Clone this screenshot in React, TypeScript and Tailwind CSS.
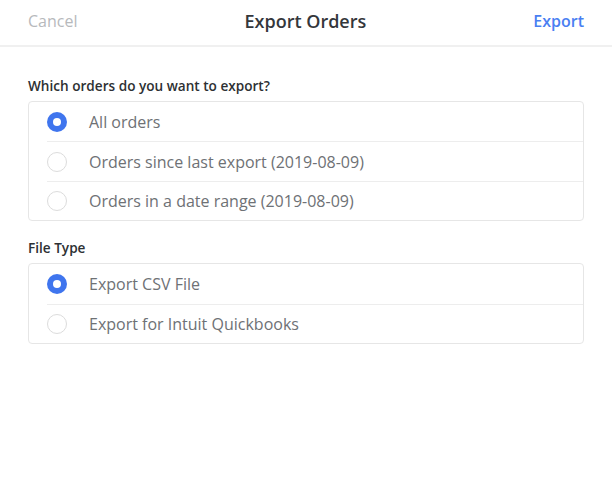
import React from "react";

const font = { fontFamily: '"Open Sans", "Liberation Sans", sans-serif' };

function Radio({ checked }: { checked: boolean }) {
  return checked ? (
    <span className="flex h-[20px] w-[20px] items-center justify-center rounded-full bg-[#3f75ee]">
      <span className="h-[8px] w-[8px] rounded-full bg-white" />
    </span>
  ) : (
    <span className="h-[20px] w-[20px] rounded-full border border-[#dcdcdc] bg-white" />
  );
}

function Group({ label, items, selected }: { label: string; items: string[]; selected: number }) {
  return (
    <div>
      <div className="text-[13.6px] font-semibold text-[#2d3033] leading-[16px]">{label}</div>
      <div className="mt-[7px] rounded-[4px] border border-[#e6e6e6]">
        {items.map((t, i) => (
          <div key={t} className="flex h-[39.4px] items-center pl-[18px]">
            <div className={"flex h-full flex-1 items-center " + (i > 0 ? "border-t border-[#ededed]" : "")}>
              <Radio checked={i === selected} />
              <span className="ml-[22px] text-[16px] text-[#6e7175]">{t}</span>
            </div>
          </div>
        ))}
      </div>
    </div>
  );
}

export default function App() {
  return (
    <div className="h-[483px] w-[612px] bg-white" style={font}>
      <div className="flex h-[47px] items-center justify-between border-b-2 border-[#f0f0f0] px-[28px] pb-[3px]">
        <span className="text-[16px] text-[#b7b9bc]">Cancel</span>
        <span className="text-[18px] font-semibold text-[#34373b]">Export Orders</span>
        <span className="text-[16px] font-semibold text-[#4a7ff2]">Export</span>
      </div>
      <div className="flex flex-col gap-[19px] px-[28px] pt-[31px]">
        <Group
          label="Which orders do you want to export?"
          items={["All orders", "Orders since last export (2019-08-09)", "Orders in a date range (2019-08-09)"]}
          selected={0}
        />
        <Group label="File Type" items={["Export CSV File", "Export for Intuit Quickbooks"]} selected={0} />
      </div>
    </div>
  );
}
